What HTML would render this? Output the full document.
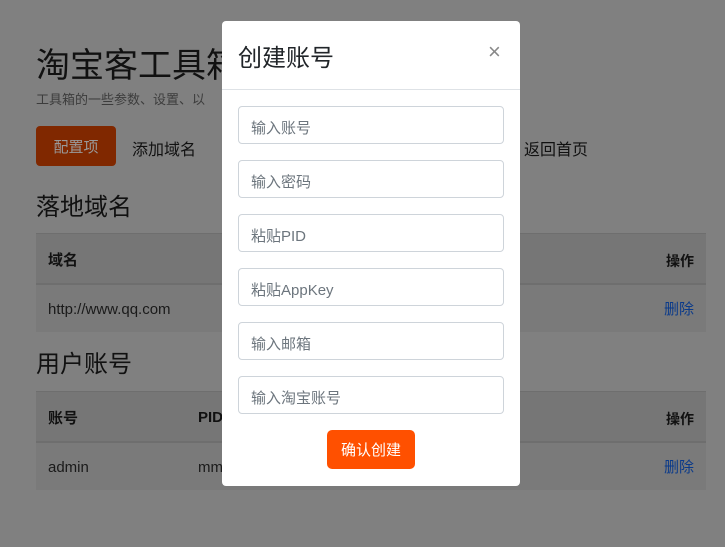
<!DOCTYPE html>
<html><head><meta charset="utf-8"><style>
*{box-sizing:border-box;margin:0;padding:0}
body{width:725px;height:547px;overflow:hidden;background:#808080;font-family:"Liberation Sans","Noto Sans CJK SC",sans-serif;color:#111;position:relative}
.a{position:absolute;white-space:nowrap}
.row{position:absolute;left:36px;width:670px}
.hd{background:#767676;border-top:1px solid #6e6e6e;border-bottom:2px solid #6e6e6e;font-weight:bold;font-size:15px}
.dr{background:#7a7a7a;font-size:15px;color:#1a1a1a}
.modal{position:absolute;left:222px;top:21px;width:298px;height:465px;background:#fff;border-radius:4px}
.inp{position:absolute;left:16px;width:266px;height:38px;border:1px solid #ced4da;border-radius:4px;font-size:15px;color:#6c757d;padding:13px 12px 0;line-height:18px}
</style></head><body>
<div class="a" style="left:36px;top:38px;font-size:34px;color:#111">淘宝客工具箱</div>
<div class="a" style="left:36px;top:89px;font-size:13px;color:#3c3c3c">工具箱的一些参数、设置、以</div>
<div class="a" style="left:36px;top:126px;width:80px;height:40px;background:#802800;border-radius:4px;color:#999;font-size:15px;line-height:44px;text-align:center">配置项</div>
<div class="a" style="left:132px;top:136px;font-size:16px;color:#111">添加域名</div>
<div class="a" style="left:524px;top:136px;font-size:16px;color:#111">返回首页</div>
<div class="a" style="left:36px;top:187px;font-size:24px;color:#111">落地域名</div>
<div class="row hd" style="top:233px;height:52px"><span class="a" style="left:12px;top:15px">域名</span><span class="a" style="right:12px;top:17px;font-size:14px">操作</span></div>
<div class="row dr" style="top:285px;height:47px"><span class="a" style="left:12px;top:16px">http://www.qq.com</span><span class="a" style="right:12px;top:13px;color:#0a3a8a">删除</span></div>
<div class="a" style="left:36px;top:344px;font-size:24px;color:#111">用户账号</div>
<div class="row hd" style="top:391px;height:52px"><span class="a" style="left:12px;top:15px">账号</span><span class="a" style="left:162px;top:17px">PID</span><span class="a" style="right:12px;top:17px;font-size:14px">操作</span></div>
<div class="row dr" style="top:443px;height:47px"><span class="a" style="left:12px;top:16px">admin</span><span class="a" style="left:162px;top:16px">mm</span><span class="a" style="right:12px;top:13px;color:#0a3a8a">删除</span></div>
<div class="modal">
<div class="a" style="left:16px;top:17px;font-size:24px;color:#212529">创建账号</div>
<div class="a" style="left:266px;top:18px;font-size:22px;color:#888">×</div>
<div class="a" style="left:0;top:68px;width:298px;height:1px;background:#dee2e6"></div>
<div class="inp" style="top:85px">输入账号</div>
<div class="inp" style="top:139px">输入密码</div>
<div class="inp" style="top:193px">粘贴PID</div>
<div class="inp" style="top:247px">粘贴AppKey</div>
<div class="inp" style="top:301px">输入邮箱</div>
<div class="inp" style="top:355px">输入淘宝账号</div>
<div class="a" style="left:105px;top:409px;width:88px;height:39px;background:#ff5000;border-radius:5px;color:#fff;font-size:15px;line-height:42px;text-align:center">确认创建</div>
</div>
</body></html>
